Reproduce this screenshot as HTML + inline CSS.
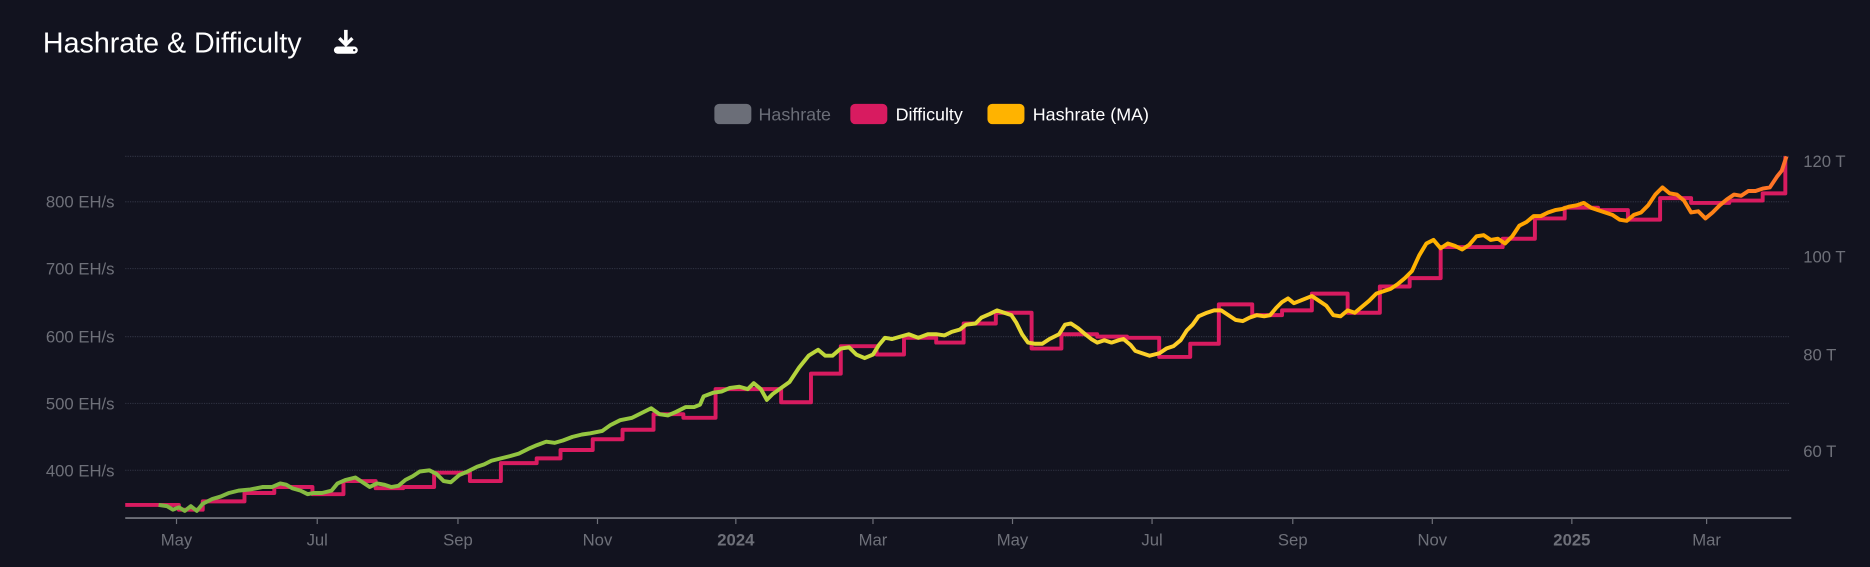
<!DOCTYPE html>
<html><head><meta charset="utf-8"><style>
html,body{margin:0;padding:0;background:#12131f;width:1870px;height:567px;overflow:hidden}
svg{display:block}
</style></head><body>
<svg width="1870" height="567" viewBox="0 0 1568 475" preserveAspectRatio="none" xmlns="http://www.w3.org/2000/svg" font-family="Liberation Sans, DejaVu Sans, sans-serif">
<rect width="1568" height="475" fill="#12131f"/>
<text x="36" y="44" font-size="24" fill="#ffffff">Hashrate &amp; Difficulty</text>
<g fill="#ffffff">
<path d="M288.5 25 h3 v9 l3-3 2 2 -6.5 6.5 -6.5-6.5 2-2 3 3z"/>
<rect x="280" y="39" width="20" height="6" rx="3"/>
</g>
<circle cx="297" cy="42" r="1" fill="#12131f"/>
<rect x="599" y="87" width="31" height="17" rx="4" fill="#6b6e78"/>
<text x="636" y="101" font-size="15" fill="#6b6e78">Hashrate</text>
<rect x="713" y="87" width="31" height="17" rx="4" fill="#d81b60"/>
<text x="751" y="101" font-size="15" fill="#ffffff">Difficulty</text>
<rect x="828" y="87" width="31" height="17" rx="4" fill="#ffb300"/>
<text x="866" y="101" font-size="15" fill="#ffffff">Hashrate (MA)</text>
<g stroke="#2e3140" stroke-width="1" stroke-dasharray="1 1">
<line x1="105" y1="131" x2="1500" y2="131"/>
<line x1="105" y1="169" x2="1500" y2="169"/>
<line x1="105" y1="225" x2="1500" y2="225"/>
<line x1="105" y1="282" x2="1500" y2="282"/>
<line x1="105" y1="338" x2="1500" y2="338"/>
<line x1="105" y1="394" x2="1500" y2="394"/>
</g>
<g font-size="14" fill="#6e7079" text-anchor="end">
<text x="96" y="174">800 EH/s</text>
<text x="96" y="230">700 EH/s</text>
<text x="96" y="287">600 EH/s</text>
<text x="96" y="343">500 EH/s</text>
<text x="96" y="399">400 EH/s</text>
</g>
<g font-size="14" fill="#6e7079">
<text x="1512" y="140">120 T</text>
<text x="1512" y="220">100 T</text>
<text x="1512" y="302">80 T</text>
<text x="1512" y="383">60 T</text>
</g>
<line x1="105" y1="434" x2="1502" y2="434" stroke="#6e7079" stroke-width="1.5"/>
<g stroke="#6e7079" stroke-width="1">
<line x1="148" y1="434" x2="148" y2="439"/><line x1="266" y1="434" x2="266" y2="439"/><line x1="384" y1="434" x2="384" y2="439"/><line x1="501" y1="434" x2="501" y2="439"/><line x1="617" y1="434" x2="617" y2="439"/><line x1="732" y1="434" x2="732" y2="439"/><line x1="849" y1="434" x2="849" y2="439"/><line x1="966" y1="434" x2="966" y2="439"/><line x1="1084" y1="434" x2="1084" y2="439"/><line x1="1201" y1="434" x2="1201" y2="439"/><line x1="1318" y1="434" x2="1318" y2="439"/><line x1="1431" y1="434" x2="1431" y2="439"/>
</g>
<g font-size="14" fill="#6e7079" text-anchor="middle">
<text x="148" y="457">May</text><text x="266" y="457">Jul</text><text x="384" y="457">Sep</text><text x="501" y="457">Nov</text>
<text x="617" y="457" font-weight="bold">2024</text><text x="732" y="457">Mar</text><text x="849" y="457">May</text><text x="966" y="457">Jul</text>
<text x="1084" y="457">Sep</text><text x="1201" y="457">Nov</text><text x="1318" y="457" font-weight="bold">2025</text><text x="1431" y="457">Mar</text>
</g>
<defs>
<linearGradient id="g" gradientUnits="userSpaceOnUse" x1="105" y1="0" x2="1500" y2="0">
<stop offset="0" stop-color="#7cb342"/>
<stop offset="0.35" stop-color="#9ccc40"/>
<stop offset="0.45" stop-color="#cddc39"/>
<stop offset="0.62" stop-color="#ffd02a"/>
<stop offset="0.78" stop-color="#ffb300"/>
<stop offset="0.9" stop-color="#ff9800"/>
<stop offset="1" stop-color="#ff6f2c"/>
</linearGradient>
</defs>
<polyline fill="none" stroke="#d81b60" stroke-width="3.3" stroke-linejoin="round" points="105,423 150,423 150,427 170,427 170,420 205,420 205,413 230,413 230,408 262,408 262,414 288,414 288,403 315,403 315,409 338,409 338,408 364,408 364,396 394,396 394,403 420,403 420,388 450,388 450,384 470,384 470,377 497,377 497,368 522,368 522,360 548,360 548,347 573,347 573,350 600,350 600,326 628,326 655,326 655,337 680,337 680,313 705,313 705,290 735,290 735,297 758,297 758,283 785,283 785,287 808,287 808,271 835,271 835,262 865,262 865,292 890,292 890,280 920,280 920,282 945,282 945,283 972,283 972,299 998,299 998,288 1022,288 1022,255 1050,255 1050,264 1075,264 1075,260 1100,260 1100,246 1130,246 1130,262 1157,262 1157,240 1182,240 1182,233 1208,233 1208,207 1235,207 1260,207 1260,200 1287,200 1287,183 1312,183 1312,174 1340,174 1340,176 1365,176 1365,184 1392,184 1392,166 1418,166 1418,170 1450,170 1450,168 1478,168 1478,162 1497,162 1497,131"/>
<polyline fill="none" stroke="url(#g)" stroke-width="3.3" stroke-linejoin="round" points="133,423 140,424 145,427 150,425 155,428 160,424 165,428 170,422 178,418 185,416 192,413 200,411 210,410 220,408 228,408 235,405 240,406 245,409 252,411 258,414 263,413 270,413 278,411 283,405 290,402 298,400 304,404 310,408 316,405 322,406 328,408 334,407 340,402 346,399 352,395 360,394 366,397 372,403 378,404 385,398 392,395 400,391 406,389 412,386 420,384 428,382 435,380 443,376 450,373 458,370 465,371 472,369 480,366 488,364 495,363 505,361 512,356 520,352 530,350 538,346 546,342 553,347 560,348 567,345 575,341 582,341 587,339 590,332 598,329 605,328 612,325 620,324 627,326 632,321 638,326 643,335 648,330 655,325 662,320 670,308 678,298 686,293 692,298 698,298 705,292 712,291 718,297 725,300 732,297 737,289 742,283 748,284 755,282 762,280 770,283 778,280 785,280 792,281 798,278 805,276 810,272 818,271 823,266 830,263 836,260 842,262 848,264 852,270 857,280 862,287 868,288 874,288 880,284 888,280 893,272 898,271 904,275 910,280 915,284 920,287 926,285 932,287 938,285 942,284 948,289 952,294 958,296 964,298 968,297 972,296 978,292 984,290 990,285 995,277 1000,272 1005,265 1012,262 1018,260 1024,260 1030,264 1036,268 1042,269 1048,266 1054,264 1060,265 1065,264 1070,258 1075,253 1080,250 1085,254 1090,252 1095,250 1100,248 1106,252 1112,256 1118,264 1124,265 1130,260 1136,262 1142,257 1148,252 1154,246 1160,244 1166,242 1172,238 1178,233 1184,227 1190,214 1196,204 1202,201 1208,208 1214,204 1220,206 1226,209 1232,205 1238,198 1244,197 1250,201 1256,200 1262,204 1268,198 1274,189 1280,186 1286,181 1292,181 1298,178 1304,176 1310,175 1316,173 1322,172 1328,170 1334,174 1340,176 1346,178 1352,180 1358,184 1364,185 1370,180 1376,178 1382,172 1388,163 1394,157 1400,162 1406,163 1412,168 1418,178 1424,177 1430,183 1436,178 1442,172 1448,167 1454,163 1460,164 1466,160 1472,160 1478,158 1484,157 1490,148 1494,143 1498,131"/>
</svg>
</body></html>
